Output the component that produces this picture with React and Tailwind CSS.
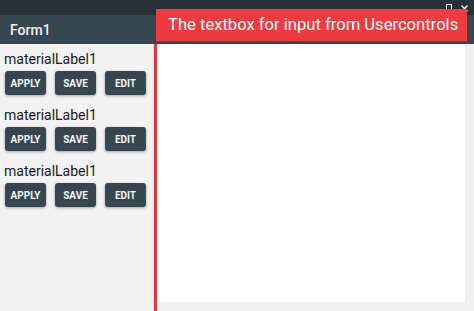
import React from "react";

function Row() {
  return (
    <div className="flex flex-col">
      <div className="h-[20px] pl-[4px] text-[14px] leading-[20px] text-[#1a1a1a]">materialLabel1</div>
      <div className="mt-[2px] flex gap-[9px] pl-[5px]">
        {["APPLY", "SAVE", "EDIT"].map((t) => (
          <div
            key={t}
            className="flex h-[24px] w-[41px] items-center justify-center rounded-[3px] bg-[#37474f] text-[10px] font-bold text-[#f4f4f4] shadow-[0_1px_3px_rgba(0,0,0,0.35)]"
          >
            {t}
          </div>
        ))}
      </div>
    </div>
  );
}

export default function App() {
  return (
    <div
      className="relative flex h-[311px] w-[474px] flex-col overflow-hidden bg-[#f0f0f0]"
      style={{ fontFamily: "Roboto, 'Liberation Sans', sans-serif" }}
    >
      <div className="flex h-[15px] items-start justify-end gap-[9px] bg-[#263238] pr-[6px] pt-[4px]">
        <div className="h-[7px] w-[6px] border border-white" />
        <svg width="7" height="7" viewBox="0 0 7 7" className="mt-[1px]">
          <path d="M0.5 0.5L6.5 6.5M6.5 0.5L0.5 6.5" stroke="white" strokeWidth="1.2" />
        </svg>
      </div>
      <div className="flex h-[29px] items-center bg-[#37474f] pl-[10px] pt-[2px] text-[14px] font-medium text-[#f1f1f1]">
        Form1
      </div>
      <div className="flex flex-1">
        <div className="flex w-[154px] flex-col gap-[10px] bg-[#f2f2f2] pt-[5px]">
          <Row />
          <Row />
          <Row />
        </div>
        <div className="w-[3px] bg-[#e8383d]" />
        <div className="flex flex-1 flex-col">
          <div className="h-[258px] w-[308px] bg-white" />
        </div>
      </div>
      <div className="absolute left-[156px] top-[9px] flex h-[33px] w-[311px] items-center border-b border-[#b8262b] bg-[#ef3b40] pl-[12px] text-[16.6px] text-white">
        The textbox for input from Usercontrols
      </div>
    </div>
  );
}
